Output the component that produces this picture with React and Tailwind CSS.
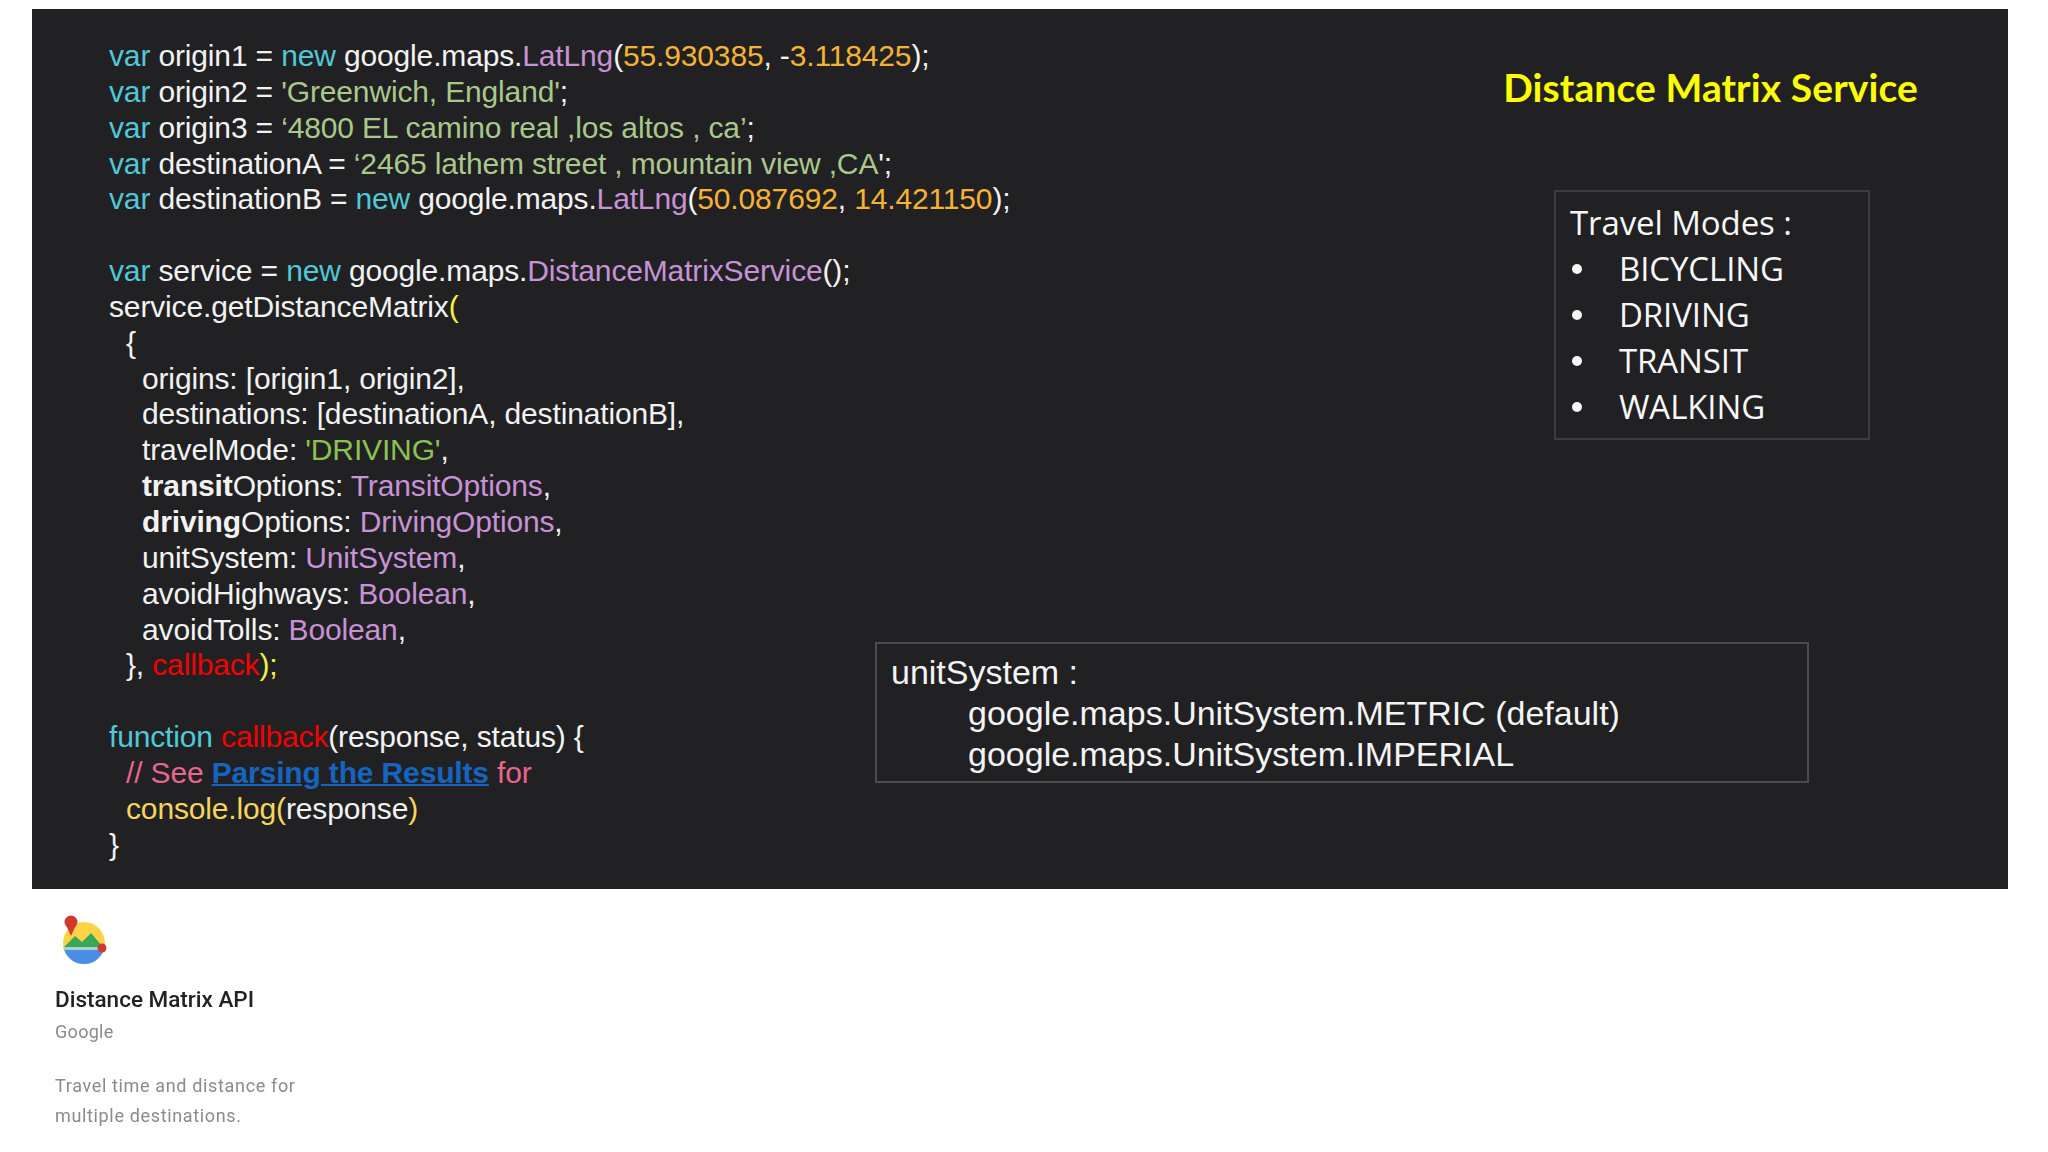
import React from 'react';

const cyan = 'text-[#4fc8d8]';
const purple = 'text-[#c792d6]';
const orange = 'text-[#f5b335]';
const green = 'text-[#a9c88c]';
const lime = 'text-[#8bc152]';
const red = 'text-[#f40000]';
const yellow = 'text-[#f4f142]';
const pink = 'text-[#e8658f]';
const gold = 'text-[#f6d55c]';

// each row: [indent class, segments]
const rows = [
  ['', [['var', cyan], [' origin1 = '], ['new', cyan], [' google.maps.'], ['LatLng', purple], ['('], ['55.930385', orange], [', -'], ['3.118425', orange], [');']]],
  ['', [['var', cyan], [' origin2 = '], ["'Greenwich, England'", green], [';']]],
  ['', [['var', cyan], [' origin3 = '], ['‘4800 EL camino real ,los altos , ca’', green], [';']]],
  ['', [['var', cyan], [' destinationA = '], ['‘2465 lathem street , mountain view ,CA', green], ["';"]]],
  ['', [['var', cyan], [' destinationB = '], ['new', cyan], [' google.maps.'], ['LatLng', purple], ['('], ['50.087692', orange], [', '], ['14.421150', orange], [');']]],
  ['', []],
  ['', [['var', cyan], [' service = '], ['new', cyan], [' google.maps.'], ['DistanceMatrixService', purple], ['();']]],
  ['', [['service.getDistanceMatrix'], ['(', yellow]]],
  ['pl-[17px]', [['{']]],
  ['pl-[33px]', [['origins: [origin1, origin2],']]],
  ['pl-[33px]', [['destinations: [destinationA, destinationB],']]],
  ['pl-[33px]', [['travelMode: '], ["'DRIVING'", lime], [',']]],
  ['pl-[33px]', [['transit', 'font-bold'], ['Options: '], ['TransitOptions', purple], [',']]],
  ['pl-[33px]', [['driving', 'font-bold'], ['Options: '], ['DrivingOptions', purple], [',']]],
  ['pl-[33px]', [['unitSystem: '], ['UnitSystem', purple], [',']]],
  ['pl-[33px]', [['avoidHighways: '], ['Boolean', purple], [',']]],
  ['pl-[33px]', [['avoidTolls: '], ['Boolean', purple], [',']]],
  ['pl-[17px]', [['}, '], ['callback', red], [');', yellow]]],
  ['', []],
  ['', [['function', cyan], [' '], ['callback', red], ['(response, status) {']]],
  ['pl-[17px]', [['// See ', pink], ['Parsing the Results', 'font-bold text-[#1565c0] underline decoration-2'], [' for', pink]]],
  ['pl-[17px]', [['console.log(', gold], ['response'], [')', gold]]],
  ['', [['}']]],
];

const modes = ['BICYCLING', 'DRIVING', 'TRANSIT', 'WALKING'];

const ApiIcon = () => (
  <svg width="50" height="52" viewBox="0 0 50 52" className="block">
    <circle cx="24" cy="28" r="21" fill="#fbd344" />
    <path d="M4 32 L15 21 L22 27 L31 18 L42 31 L43 32 Z" fill="#3aa757" />
    <rect x="3.5" y="32" width="41" height="3" fill="#a8d5c8" />
    <path d="M4.2 35 H43.8 A21 21 0 0 1 4.2 35 Z" fill="#4a8fe7" />
    <circle cx="11" cy="7" r="6.5" fill="#d0392f" />
    <path d="M6 10 L11 21 L16 10 Z" fill="#d0392f" />
    <circle cx="42" cy="33" r="4.5" fill="#d0392f" />
  </svg>
);

export default function App() {
  return (
    <div className="w-[2048px] h-[1152px] bg-white overflow-hidden pt-[9px] pl-[32px]">
      <div className="w-[1976px] h-[880px] bg-[#212123] flex">
        <div className="w-[843px] shrink-0 pt-[29px] pl-[77px] whitespace-pre text-[30px] leading-[35.85px] tracking-[-0.15px] text-[#f2f2f2] font-['Liberation_Sans',sans-serif]">
          {rows.map(([indent, segs], i) => (
            <div key={i} className={`h-[35.85px] ${indent}`}>
              {segs.map(([text, cls], j) => (
                <span key={j} className={cls}>{text}</span>
              ))}
            </div>
          ))}
        </div>

        <div className="flex-1 flex flex-col items-start">
          <div className="self-end mr-[90px] mt-[50px] text-[39px] leading-[56px] font-bold text-[#ffff00] font-['Lato',sans-serif] tracking-[0.1px]">
            Distance Matrix Service
          </div>

          <div className="self-end mr-[138px] mt-[75px] w-[316px] h-[250px] border-2 border-[#3c3c3f] pl-[14px] pt-[8px] text-[#f7f7f7] text-[33px] leading-[46px] tracking-[-0.1px] font-['Open_Sans',sans-serif]">
            <div>Travel Modes :</div>
            {modes.map((mode) => (
              <div key={mode} className="flex items-center">
                <span className="w-[10px] h-[10px] rounded-full bg-[#f7f7f7] ml-[2px] mr-[37px]" />
                <span>{mode}</span>
              </div>
            ))}
          </div>

          <div className="mt-[202px] w-[934px] h-[141px] border-2 border-[#4b4b4e] pl-[14px] pt-[8px] text-[#f4f4f4] text-[34px] leading-[41px] font-['Liberation_Sans',sans-serif]">
            <div>unitSystem :</div>
            <div className="pl-[77px]">google.maps.UnitSystem.METRIC (default)</div>
            <div className="pl-[77px]">google.maps.UnitSystem.IMPERIAL</div>
          </div>
        </div>
      </div>

      <div className="pl-[23px] font-['Roboto',sans-serif] blur-[0.5px]">
        <div className="pl-[5px] pt-[26px]">
          <ApiIcon />
        </div>
        <div className="mt-[17px] text-[22.5px] leading-[30px] font-medium text-[#222222]">Distance Matrix API</div>
        <div className="mt-[3px] text-[18px] leading-[30px] text-[#8a8a8a] tracking-[0.3px]">Google</div>
        <div className="mt-[24px] text-[18px] leading-[30px] text-[#8a8a8a] tracking-[0.65px]">
          Travel time and distance for<br />multiple destinations.
        </div>
      </div>
    </div>
  );
}
